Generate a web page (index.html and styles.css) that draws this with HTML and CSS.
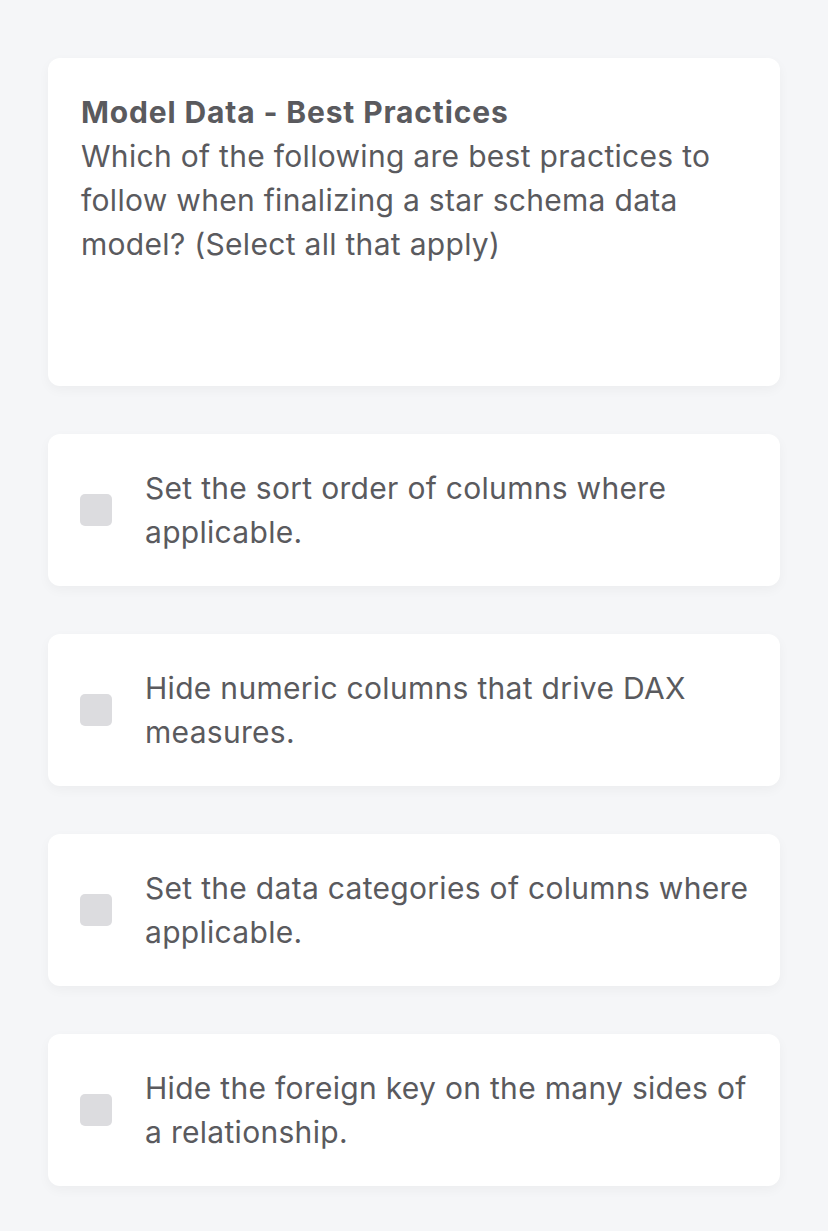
FILE: index.html
```html
<!DOCTYPE html>
<html lang="en">
<head>
    <meta charset="UTF-8">
    <meta name="viewport" content="width=device-width, initial-scale=1.0">
    <title>Model Data - Best Practices</title>
    <link rel="stylesheet" href="styles.css">
</head>
<body>
    <div class="quiz">
        <div class="card question">
            <h2 class="question-title">Model Data - Best Practices</h2>
            <p class="question-text">Which of the following are best practices to follow when finalizing a star schema data model? (Select all that apply)</p>
        </div>

        <label class="card option">
            <span class="checkbox"></span>
            <span class="option-text">Set the sort order of columns where applicable.</span>
        </label>

        <label class="card option">
            <span class="checkbox"></span>
            <span class="option-text">Hide numeric columns that drive DAX measures.</span>
        </label>

        <label class="card option">
            <span class="checkbox"></span>
            <span class="option-text">Set the data categories of columns where applicable.</span>
        </label>

        <label class="card option">
            <span class="checkbox"></span>
            <span class="option-text">Hide the foreign key on the many sides of a relationship.</span>
        </label>
    </div>
</body>
</html>
```

FILE: styles.css
```css
* {
    margin: 0;
    padding: 0;
    box-sizing: border-box;
    font-family: Inter, 'Noto Sans', sans-serif;
}

body {
    min-height: 100vh;
    background-color: #f5f6f8;
    padding: 58px 48px;
}

.quiz {
    display: flex;
    flex-direction: column;
    gap: 48px;
}

.card {
    background-color: white;
    border-radius: 12px;
    box-shadow: 0 4px 12px rgba(0, 0, 0, 0.04);
}

.question {
    padding: 32px 33px;
    min-height: 328px;
    color: #5a5a5e;
}

.question-title {
    font-size: 30px;
    font-weight: 700;
    line-height: 44px;
    letter-spacing: 0.85px;
}

.question-text {
    font-size: 30px;
    line-height: 44px;
    letter-spacing: 0.3px;
}

.option {
    display: flex;
    align-items: center;
    padding: 32px 22px 32px 32px;
    min-height: 152px;
    cursor: pointer;
}

.checkbox {
    flex-shrink: 0;
    width: 32px;
    height: 32px;
    border-radius: 5px;
    background-color: #dcdcdf;
    margin-right: 33px;
}

.option-text {
    font-size: 30px;
    line-height: 44px;
    letter-spacing: 0.3px;
    color: #5a5a5e;
}
```
